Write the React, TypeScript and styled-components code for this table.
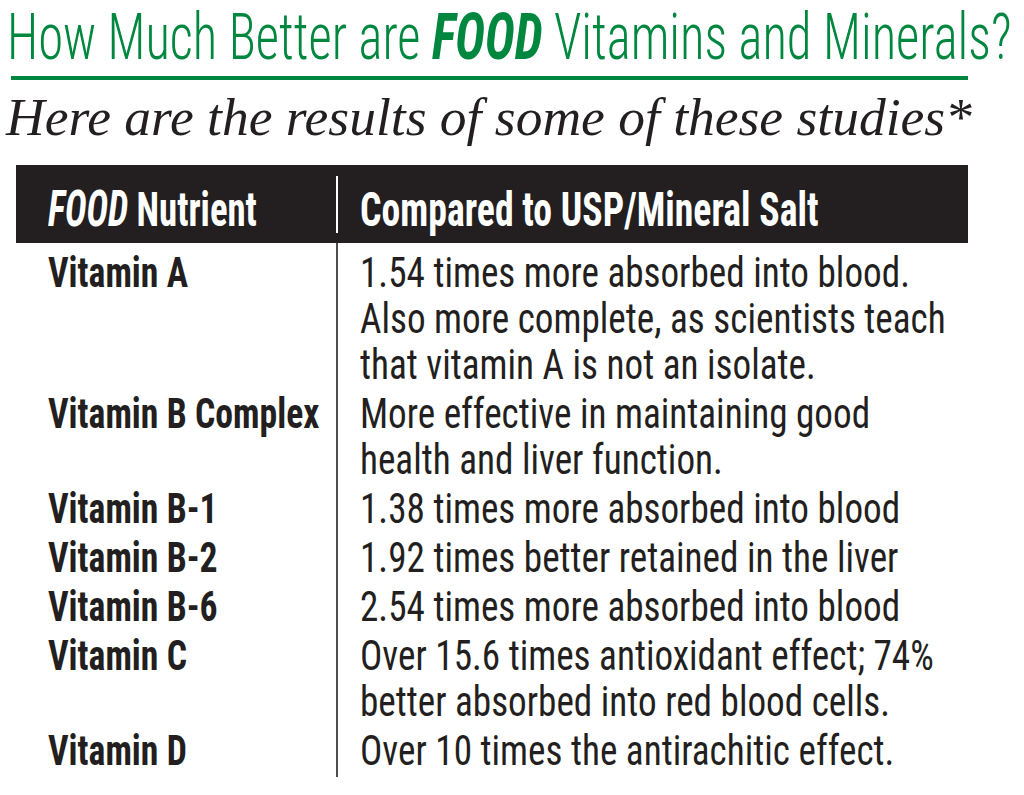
import React from "react";
import styled, { createGlobalStyle } from "styled-components";

const Global = createGlobalStyle`
  html, body { margin: 0; padding: 0; background: #ffffff; overflow: hidden; }
  body { font-family: "Roboto Condensed", "Roboto", sans-serif; color: #231f20; }
`;

const Page = styled.div`
  width: 1024px;
  height: 795px;
  display: flex;
  flex-direction: column;
  overflow: hidden;
`;

/* Narrows a run of text to the width of the condensed face in the original artwork */
const Narrow = styled.span<{ $k: number }>`
  display: inline-block;
  white-space: nowrap;
  transform: scaleX(${(p) => p.$k});
  transform-origin: 0 50%;
`;

const Title = styled.h1`
  margin: 0;
  padding: 0 0 0 7px;
  font-family: "Roboto Condensed", sans-serif;
  font-weight: 300;
  font-size: 65px;
  line-height: 74px;
  color: #00873f;
  white-space: nowrap;
  overflow-x: clip;
`;

const Em = styled.em`
  font-weight: 700;
  font-style: italic;
`;

const Rule = styled.div`
  margin: 2px 0 0 11px;
  width: 957px;
  height: 4px;
  background: #00873f;
`;

const Subtitle = styled.h2`
  margin: 0;
  padding: 7px 0 0 6px;
  font-family: "Liberation Serif", serif;
  font-style: italic;
  font-weight: 400;
  font-size: 53.5px;
  line-height: 60px;
  color: #231f20;
  white-space: nowrap;
`;

const Table = styled.div`
  margin: 18px 0 0 16px;
  width: 952px;
  display: flex;
  flex-direction: column;
`;

const Head = styled.div`
  height: 78px;
  background: #231f20;
  display: grid;
  grid-template-columns: 320px 2px minmax(0, 1fr);
  align-items: start;
`;

const HeadCell = styled.div<{ $pad: number }>`
  padding: 17px 0 0 ${(p) => p.$pad}px;
  font-size: 49px;
  font-weight: 700;
  color: #ffffff;
  line-height: 56px;
  white-space: nowrap;
  overflow-x: clip;
`;

const HeadSep = styled.div`
  height: 57px;
  margin-top: 11px;
  background: #ffffff;
`;

const Body = styled.div`
  display: grid;
  grid-template-columns: 320px minmax(0, 1fr);
  padding: 4px 0 3px;
  background: linear-gradient(#4d4d4d, #4d4d4d) 320px 0 / 2px 100% no-repeat;
`;

const Name = styled.div`
  padding: 3px 0 0 32px;
  font-size: 42px;
  font-weight: 700;
  line-height: 46px;
  white-space: nowrap;
  overflow-x: clip;
`;

const Desc = styled.div`
  padding: 3px 0 0 24px;
  font-size: 42px;
  font-weight: 400;
  line-height: 46px;
  white-space: nowrap;
  overflow-x: clip;
`;

const Line = styled.div`
  height: 46px;
`;

const rows: { name: string; lines: string[] }[] = [
  { name: "Vitamin A", lines: ["1.54 times more absorbed into blood.", "Also more complete, as scientists teach", "that vitamin A is not an isolate."] },
  { name: "Vitamin B Complex", lines: ["More effective in maintaining good", "health and liver function."] },
  { name: "Vitamin B-1", lines: ["1.38 times more absorbed into blood"] },
  { name: "Vitamin B-2", lines: ["1.92 times better retained in the liver"] },
  { name: "Vitamin B-6", lines: ["2.54 times more absorbed into blood"] },
  { name: "Vitamin C", lines: ["Over 15.6 times antioxidant effect; 74%", "better absorbed into red blood cells."] },
  { name: "Vitamin D", lines: ["Over 10 times the antirachitic effect."] },
];

export default function App() {
  return (
    <Page>
      <Global />
      <Title>
        <Narrow $k={0.78}>How Much Better are <Em>FOOD</Em> Vitamins and Minerals?</Narrow>
      </Title>
      <Rule />
      <Subtitle>Here are the results of some of these studies*</Subtitle>
      <Table>
        <Head>
          <HeadCell $pad={32}>
            <Narrow $k={0.75}><Em>FOOD</Em> Nutrient</Narrow>
          </HeadCell>
          <HeadSep />
          <HeadCell $pad={22}>
            <Narrow $k={0.77}>Compared to USP/Mineral Salt</Narrow>
          </HeadCell>
        </Head>
        <Body>
          {rows.map((r) => (
            <React.Fragment key={r.name}>
              <Name>
                <Narrow $k={0.85}>{r.name}</Narrow>
              </Name>
              <Desc>
                {r.lines.map((l, j) => (
                  <Line key={j}>
                    <Narrow $k={0.885}>{l}</Narrow>
                  </Line>
                ))}
              </Desc>
            </React.Fragment>
          ))}
        </Body>
      </Table>
    </Page>
  );
}
